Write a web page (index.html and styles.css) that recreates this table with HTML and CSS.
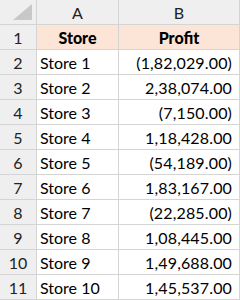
FILE: index.html
```html
<!DOCTYPE html>
<html>
<head>
<meta charset="utf-8">
<link rel="stylesheet" href="styles.css">
</head>
<body>
<div class="sheet">
  <div class="corner"><svg width="36" height="24" viewBox="0 0 36 24"><polygon points="13,20 32,20 32,4" fill="#c8c8c8"/></svg></div>
  <div class="colhead">A</div>
  <div class="colhead">B</div>

  <div class="rowhead">1</div>
  <div class="cell title">Store</div>
  <div class="cell title">Profit</div>

  <div class="rowhead">2</div><div class="cell">Store 1</div><div class="cell num">(1,82,029.00)</div>
  <div class="rowhead">3</div><div class="cell">Store 2</div><div class="cell num">2,38,074.00</div>
  <div class="rowhead">4</div><div class="cell">Store 3</div><div class="cell num">(7,150.00)</div>
  <div class="rowhead">5</div><div class="cell">Store 4</div><div class="cell num">1,18,428.00</div>
  <div class="rowhead">6</div><div class="cell">Store 5</div><div class="cell num">(54,189.00)</div>
  <div class="rowhead">7</div><div class="cell">Store 6</div><div class="cell num">1,83,167.00</div>
  <div class="rowhead">8</div><div class="cell">Store 7</div><div class="cell num">(22,285.00)</div>
  <div class="rowhead">9</div><div class="cell">Store 8</div><div class="cell num">1,08,445.00</div>
  <div class="rowhead">10</div><div class="cell">Store 9</div><div class="cell num">1,49,688.00</div>
  <div class="rowhead">11</div><div class="cell">Store 10</div><div class="cell num">1,45,537.00</div>
</div>
</body>
</html>
```
FILE: styles.css
```css
html, body {
  margin: 0;
  padding: 0;
  background: #ffffff;
}
.sheet {
  display: grid;
  grid-template-columns: 36px 81px 120px;
  grid-template-rows: 24px repeat(11, 24px);
  gap: 1px;
  padding: 0 1px 1px 0;
  width: 240px;
  height: 300px;
  box-sizing: border-box;
  background: #d4d4d4;
  font-family: Lato, "Open Sans", sans-serif;
  font-size: 16px;
  color: #000;
}
.corner, .colhead, .rowhead {
  background: #efefef;
}
.corner svg {
  display: block;
}
.colhead {
  display: flex;
  align-items: center;
  justify-content: center;
  color: #222;
}
.rowhead {
  display: flex;
  align-items: center;
  justify-content: center;
  color: #222;
}
.cell {
  background: #fff;
  display: flex;
  align-items: center;
  padding: 0 3px;
  white-space: nowrap;
}
.cell.title {
  background: #fce4d6;
  font-weight: 900;
  justify-content: center;
}
.cell.num {
  justify-content: flex-end;
  padding-right: 7px;
  letter-spacing: 0.15px;
}
```
